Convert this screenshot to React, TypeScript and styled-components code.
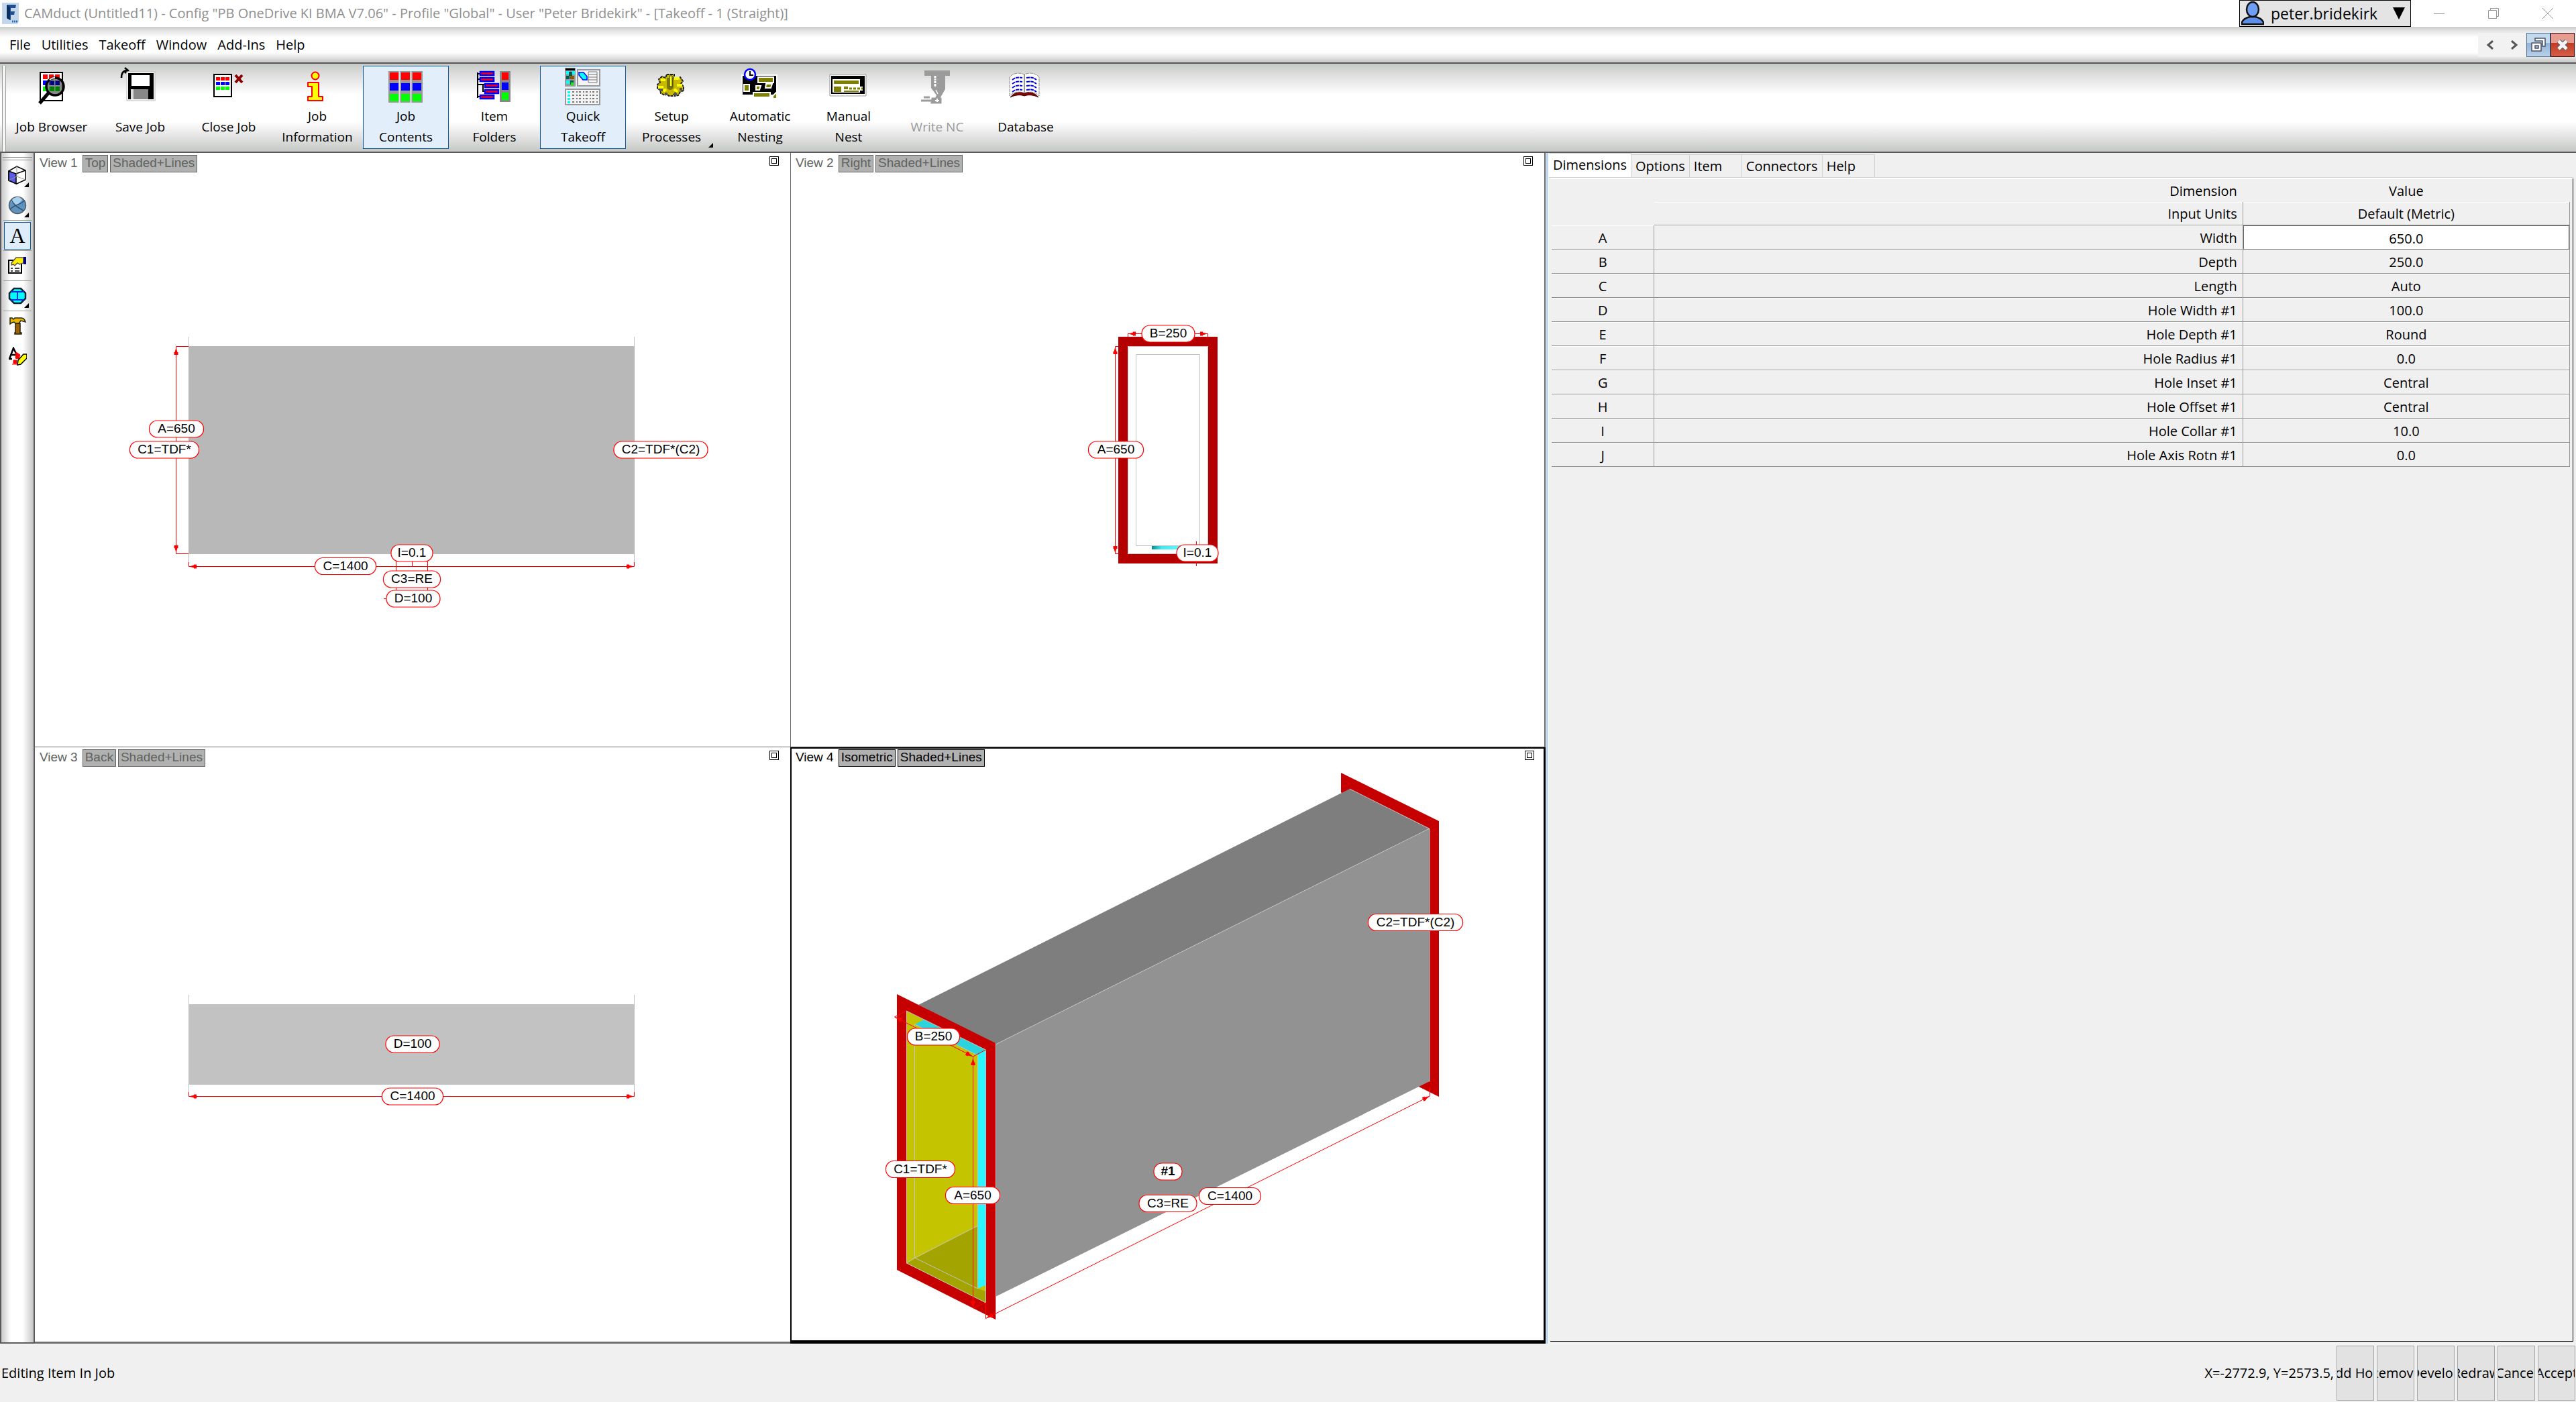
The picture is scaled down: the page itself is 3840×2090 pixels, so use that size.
import React from 'react';
import styled, { createGlobalStyle, css } from 'styled-components';

const ui = '"Open Sans", "Noto Sans", sans-serif';
const arial = '"Liberation Sans", Arial, sans-serif';

const GlobalStyle = createGlobalStyle`
  *, *::before, *::after { box-sizing: border-box; }
  body { margin: 0; background: #f0f0f0; color: #000; font: 20px/24px ${ui}; }
  button, input { font: inherit; color: inherit; }
`;

const Page = styled.div`
  display: flex;
  flex-direction: column;
  height: 100vh;
  min-height: 900px;
  overflow: hidden;
`;

/* ---------- title bar ---------- */

const TitleBar = styled.header`
  display: flex;
  align-items: center;
  height: 40px;
  padding-right: 2px;
  background: #fff;
  color: #8f8f8f;
`;

const AppTitle = styled.h1`
  flex: 1;
  margin: 0;
  padding-left: 6px;
  font-size: 20px;
  line-height: 24px;
  font-weight: 400;
  white-space: nowrap;
`;

const UserButton = styled.button`
  display: flex;
  align-items: center;
  width: 256px;
  height: 40px;
  margin-right: 1px;
  padding: 0 8px 0 2px;
  border: 1px solid #000;
  background: #e4e4e4;
  color: #000;
  font-size: 23px;
  span { flex: 1; text-align: left; padding-left: 10px; }
`;

const CaptionButton = styled.button`
  display: grid;
  place-items: center;
  width: 81px;
  height: 40px;
  padding: 0;
  border: 0;
  background: none;
`;

/* ---------- menu bar ---------- */

const MenuBar = styled.nav`
  display: flex;
  align-items: center;
  height: 55px;
  padding-left: 6px;
  border-bottom: 2px solid #5c585e;
  background: linear-gradient(#c9ccc9 0, #e6e6e6 7px, #fff 16px, #fff 38px, #e2e2e2 46px, #c4c8c4 53px);
`;

const MenuItem = styled.button`
  padding: 0 8px;
  border: 0;
  background: none;
`;

const ChildControls = styled.div`
  display: flex;
  align-items: center;
  margin-left: auto;
  padding-right: 2px;
  background: #f2f2f2;
`;

const ChildButton = styled.button<{ $width: number; $fill?: string; $edge?: string }>`
  display: grid;
  place-items: center;
  width: ${p => p.$width}px;
  height: 36px;
  padding: 0;
  border: ${p => (p.$edge ? `1px solid ${p.$edge}` : '0')};
  background: ${p => p.$fill ?? 'none'};
`;

/* ---------- tool bar ---------- */

const ToolBar = styled.div`
  display: flex;
  align-items: flex-start;
  gap: 4px;
  height: 133px;
  padding: 3px 0 0 3px;
  border-bottom: 2px solid #5c585e;
  background: linear-gradient(#c6cac6 0, #e2e2e2 20px, #fff 46px, #fff 86px, #e4e4e4 108px, #c4c8c4 131px);
`;

const Grip = styled.div`
  align-self: stretch;
  width: 6px;
  border-left: 1px solid #999;
  border-right: 1px solid #999;
  background: #f6f6f6;
`;

const ToolButton = styled.button<{ $active?: boolean }>`
  position: relative;
  display: flex;
  flex-direction: column;
  align-items: center;
  width: 128px;
  height: 124px;
  padding: 0;
  border: 1px solid ${p => (p.$active ? '#0c5ba0' : 'transparent')};
  background: ${p => (p.$active ? '#e2effb' : 'none')};
  font-size: 19px;
  line-height: 31px;
  &:disabled { color: #9a9a9a; }
`;

const ToolLabel = styled.span`
  display: grid;
  place-items: center;
  flex: 1;
  white-space: pre-line;
`;

const Corner = styled.i<{ $at: number }>`
  position: absolute;
  right: ${p => p.$at}px;
  bottom: ${p => p.$at}px;
  border-left: 7px solid transparent;
  border-bottom: 7px solid #000;
`;

/* ---------- work area ---------- */

const Work = styled.main`
  flex: 1;
  min-height: 0;
  display: grid;
  grid-template-columns: 52px minmax(0, 2252fr) 5px minmax(0, 1531fr);
`;

const SideBar = styled.div`
  display: flex;
  flex-direction: column;
  align-items: center;
  padding-top: 12px;
  border: solid #5c585e;
  border-width: 0 2px 2px;
  background: linear-gradient(90deg, #c8c8c8, #fff 14px, #fff 32px, #c6c6c6 48px);
`;

const SideGrip = styled.div`
  width: 44px;
  height: 5px;
  margin-top: -6px;
  border: solid #888;
  border-width: 1px 0;
`;

const SideSlot = styled.div<{ $rule?: boolean }>`
  display: grid;
  place-items: center;
  width: 42px;
  height: 45px;
  border-bottom: 1px solid ${p => (p.$rule ? '#98a098' : 'transparent')};
`;

const SideButton = styled.button<{ $active?: boolean }>`
  position: relative;
  display: grid;
  place-items: center;
  width: 40px;
  height: 41px;
  padding: 0;
  border: 1px solid ${p => (p.$active ? '#0c5ba0' : 'transparent')};
  background: ${p => (p.$active ? '#dfecf9' : 'none')};
  font-family: "Liberation Serif", "Times New Roman", serif;
  font-size: 32px;
`;

const Views = styled.section`
  display: grid;
  grid-template-columns: minmax(0, 1fr) minmax(0, 1fr);
  grid-template-rows: minmax(0, 886fr) minmax(0, 889fr);
  background: #fff;
`;

const ViewPane = styled.article<{ $active?: boolean; $col: number; $row: number }>`
  display: grid;
  grid-template: minmax(0, 1fr) / minmax(0, 1fr);
  min-height: 0;
  color: ${p => (p.$active ? '#000' : '#5e635e')};
  border: solid ${p => (p.$active ? '#000' : '#6c6c6c')};
  ${p =>
    p.$active
      ? css`border-width: 2px 3px 5px 2px;`
      : css`border-width: 0 ${p.$col === 2 ? 2 : 0}px ${p.$row === 2 ? 3 : 1}px ${p.$col === 2 ? 1 : 0}px;`}
`;

const ViewHead = styled.div<{ $active?: boolean }>`
  grid-area: 1 / 1;
  z-index: 1;
  display: flex;
  align-items: center;
  align-self: start;
  gap: 3px;
  padding: ${p => (p.$active ? '1px 14px 0 6px' : '3px 17px 0 7px')};
  font: 19px/22px ${arial};
`;

const ViewName = styled.h2`
  margin: 0;
  padding: 0 4px 2px 0;
  font: inherit;
`;

const ViewMode = styled.button`
  height: 26px;
  padding: 0 3px 2px;
  border: 1px solid currentColor;
  background: #b1b1b1;
`;

const MaxButton = styled.button`
  width: 14px;
  height: 14px;
  margin: 0 0 8px auto;
  padding: 0;
  border: 1px solid #000;
  box-shadow: inset 0 0 0 2px #fff, inset 0 0 0 3px #000;
  background: #fff;
`;

const Drawing = styled.svg`
  grid-area: 1 / 1;
  width: 100%;
  height: 100%;
  text { font-family: ${arial}; font-size: 19px; fill: #000; text-anchor: middle; }
`;

const Splitter = styled.div`
  border-left: 1px solid #eef;
  border-right: 1px solid #fff;
  background: #b9d5f0;
`;

/* ---------- properties ---------- */

const Properties = styled.aside`
  display: flex;
  flex-direction: column;
  min-width: 0;
  padding: 0 4px 3px 0;
`;

const TabList = styled.div`
  display: flex;
  align-items: flex-end;
  height: 37px;
  border-bottom: 1px solid #d0d6d0;
`;

const Tab = styled.button<{ $active?: boolean }>`
  min-width: 78px;
  height: ${p => (p.$active ? 37 : 35)}px;
  margin-bottom: -1px;
  padding: 0 6px ${p => (p.$active ? 2 : 0)}px;
  border: 1px solid #cdd3cd;
  border-left-width: 0;
  background: ${p => (p.$active ? '#fff' : '#f0f0f0')};
  text-align: left;
`;

const Sheet = styled.div`
  flex: 1;
  margin-left: 2px;
  padding: 0 4px 0 2px;
  border: solid;
  border-width: 2px 1px 1px 0;
  border-color: #fff #000 #000 #fff;
`;

const Table = styled.table`
  width: 100%;
  table-layout: fixed;
  border-collapse: separate;
  border-spacing: 0;
  th, td { height: 36px; padding: 2px 0 0; font-weight: 400; border-bottom: 1px solid #8b918b; box-shadow: inset 0 1px #fff; }
  tr > :nth-child(1) { text-align: center; border-right: 1px solid #999; }
  tr > :nth-child(2) { text-align: right; padding-right: 8px; border-right: 1px solid #999; }
  tr > :nth-child(3) { text-align: center; border-right: 1px solid #999; }
  thead th { height: 34px; box-shadow: none; border-color: transparent !important; }
  tbody tr:first-child > * { height: 35px; }
  tbody tr:first-child > :first-child { border-color: transparent; box-shadow: none; }
  tbody tr > td:has(input) { padding: 0; }
`;

const ValueInput = styled.input`
  display: block;
  width: 100%;
  height: 36px;
  margin-bottom: -1px;
  padding: 2px 0 0;
  border: 1px solid #666;
  background: #fff;
  text-align: center;
  outline: 0;
`;

/* ---------- status bar ---------- */

const StatusBar = styled.footer`
  display: flex;
  align-items: center;
  gap: 4px;
  height: 87px;
  padding: 0 1px 0 2px;
  border-top: 1px solid #fafafa;
`;

const Message = styled.p`
  flex: 1;
  margin: 0;
`;

const Action = styled.button`
  display: flex;
  justify-content: center;
  align-items: center;
  width: 56px;
  height: 82px;
  padding: 0;
  overflow: hidden;
  border: 1px solid #a6a6a6;
  background: #e2e2e2;
  white-space: nowrap;
`;

/* ---------- icons ---------- */

const R = '#f00';
const B = '#00f';
const G = '#0f0';

const MiniGrid = ({ x, y, w, h, px, py, colors = [R, B, G] }: { x: number; y: number; w: number; h: number; px: number; py: number; colors?: string[] }) => (
  <g>
    {colors.map((c, r) => [0, 1, 2].map(k => <rect key={`${r}${k}`} x={x + k * px} y={y + r * py} width={w} height={h} fill={c} />))}
  </g>
);

const toolIcons: Record<string, React.ReactNode> = {
  browser: (
    <>
      <rect x="15" y="9" width="33" height="42" fill="#fff" stroke="#000" strokeWidth="2" />
      <MiniGrid x={19} y={12} w={7} h={7} px={9} py={9} />
      <circle cx="37" cy="30" r="13" fill="#555" fillOpacity=".7" stroke="#000" strokeWidth="3.5" />
      <path d="M30 22h6v6h-6zM38 22h6v6h-6z" fill="#000080" />
      <path d="M30 30h6v7h-6zM38 30h6v7h-6z" fill="#008000" />
      <path d="M29 20a10 10 0 0 1 8-3" stroke="#ddd" strokeWidth="2" fill="none" />
      <path d="M27 40 14 55" stroke="#000" strokeWidth="5" />
    </>
  ),
  save: (
    <>
      <path d="M4 17c0-6 2-11 9-11M9 2l5 4-5 4" fill="none" stroke="#000" strokeWidth="2.5" />
      <rect x="12" y="8" width="42" height="43" fill="#fff" stroke="#bbb" />
      <path d="M14 10h38v39H14z" fill="#000" />
      <path d="M19 13h27v16H19z" fill="#fff" />
      <path d="M22 34h22v15H22z" fill="#888" />
      <path d="M18 34h4v15h-4z" fill="#ddd" />
    </>
  ),
  close: (
    <>
      <rect x="10" y="12" width="26" height="33" fill="#fff" stroke="#000" strokeWidth="2" />
      <MiniGrid x={13} y={16} w={6} h={5} px={7} py={7} />
      <path d="m42 13 10 11M52 13 42 24" stroke="#8b0000" strokeWidth="4" />
    </>
  ),
  info: (
    <>
      <ellipse cx="29" cy="14" rx="5.5" ry="5.5" fill="#ff0" stroke={R} strokeWidth="2" />
      <path d="M18 24h16v21h6v6H18v-6h6V30h-6z" fill="#ff0" stroke={R} strokeWidth="2" strokeLinejoin="round" />
    </>
  ),
  contents: (
    <>
      <path d="M6 7h51v47H6z" fill="#999" />
      <MiniGrid x={8} y={9} w={13} h={11} px={17} py={16} />
      <path d="M22.500 7v47M39.500 7v47" stroke="#e0e0e0" strokeWidth="2" />
    </>
  ),
  folders: (
    <>
      <path d="M7 9v38M7 11h4M7 19h4M7 27h10M7 45h5M15 27v10h4" stroke="#000" strokeWidth="2" fill="none" />
      {[[10, 7], [10, 16], [17, 25], [17, 34], [10, 42]].map(([x, y]) => (
        <rect key={y} x={x + 1} y={y + 1} width="20" height="5" fill={R} stroke={B} strokeWidth="2.500" />
      ))}
      <path d="M40 7h16v46H40z" fill="#888" />
      <path d="M43 9h10v11H43z" fill={R} />
      <path d="M43 24h10v11H43z" fill={B} />
      <path d="M43 39h10v11H43z" fill={G} />
    </>
  ),
  quick: (
    <>
      <path d="M5 2h16v28H5z" fill="#999" />
      <path d="M6 3h14v3H6z" fill="#000" />
      <path d="M7 7h5v5H7zM15 7h5v5h-5zM7 21h5v5H7z" fill="#0ff" />
      <path d="M11 8h5v6h-5zM7 14h5v5H7zM13 21h5v6h-5z" fill="#055" />
      <path d="M13 14h6v5h-6z" fill="#850" />
      <path d="M14 24h4v4h-4z" fill={G} />
      <path d="M24 5h33v24H24z" fill="#f4f4f4" stroke="#999" strokeWidth="2" />
      <path d="M26 9h7l5 6v5h-6l-6-7z" fill="#0ff" stroke={B} strokeWidth="1.500" />
      <path d="M40 8h13M40 12h13M40 16h13M40 20h13M40 24h13M40 8v16M53 8v16" stroke="#777" />
      <path d="M6 34h51v23H6z" fill="#f4f4f4" stroke="#999" strokeWidth="2" />
      <path d="M9 37h4v3H9zM9 42h4v3H9zM9 47h4v3H9zM9 52h4v3H9z" fill="#0ff" />
      <path d="M16 38h38M16 43h38M16 48h38M16 53h38" stroke="#777" strokeWidth="2" strokeDasharray="3 3 2 2" />
    </>
  ),
  setup: (
    <>
      <path
        d="M25 12h11v5l4 2 5-3 4 6-3 4 4 4v6l-5 2-3 5-5 1v-4l-3 4h-6l-3-3-3 2-6-3-1-5-4-2v-6l4-3-2-5 5-4 5 2z"
        fill="#c8b800"
        stroke="#222"
        strokeWidth="2"
        strokeDasharray="4 1"
      />
      <path d="M16 20h7M12 31h8M36 18h8M40 28h8M20 37l4-3M36 34l5 4" stroke="#ff0" strokeWidth="4" />
      <path d="M14 35h5M22 41h4M36 41h4M44 34h4" stroke="#555" strokeWidth="4" />
      <path d="M25 17h10v14a5 4 0 0 1-10 0z" fill="#7a7400" />
      <path d="M29 14h4v16h-4z" fill="#ff0" stroke="#333" />
    </>
  ),
  auto: (
    <>
      <path d="M5 13h52v30H5z" fill="#000" stroke="#fff" strokeWidth="2" />
      <path d="M29 16h23v8H29zM8 27h8v10H8zM22 39h25v7H22z" fill="#808000" stroke="#fff" strokeWidth="2" />
      <path d="M26 29h7l-2 6h-5zM41 26h9l-2 6h-8zM51 44l6-6v10h-6z" fill="#808000" stroke="#fff" strokeWidth="2" />
      <circle cx="17" cy="12" r="8" fill="#fff" stroke={B} strokeWidth="2.500" />
      <path d="M17 7v6h5" stroke="#000" strokeWidth="2" fill="none" />
    </>
  ),
  manual: (
    <>
      <path d="M4 12h54v32H4z" fill="#fff" stroke="#999" />
      <path d="M6 14h50v27H6z" fill="#000" />
      <path d="M8 19h41v20H8z" fill="#fff" />
      <path d="M10 21h37v5H10zM10 30h11v8H10zM25 30h6v4h-6zM25 36h22v2H25z" fill="#808000" />
      <path d="M33 33h20M33 29l4 3" stroke="#fff" strokeWidth="6" />
      <path d="M33 33h20" stroke="#808000" strokeWidth="3" strokeDasharray="4 2" />
    </>
  ),
  write: (
    <>
      <path d="M13 6h38v8h-7v20l-7 12-1 3H28l3-6-8-11V14H13z" fill="#9b9b9b" />
      <path d="M29 14v17" stroke="#fff" strokeWidth="3" strokeDasharray="3 1" />
      <path d="M30 35l3 6" stroke="#fff" strokeWidth="1.500" />
      <path d="M8 51h28M12 46h9M25 48h12v6H24z" stroke="#9b9b9b" strokeWidth="3" fill="#9b9b9b" />
      <path d="M32 48v5M29 51h6" stroke="#fff" strokeWidth="2" />
    </>
  ),
  database: (
    <>
      <path d="M8 44V16c6-7 16-7 22-4 6-3 16-3 22 4v28c-6-7-16-7-22-4-6-3-16-3-22 4z" fill="#fff" stroke="#888" strokeDasharray="5 1" />
      <path d="M9 46c6-8 15-8 21-6 6-2 15-2 21 6-8-4-16-4-21-2-5-2-13-2-21 2z" fill="#8b0000" stroke="#400" />
      <path d="M30 12v28" stroke="#999" strokeWidth="2" />
      <path d="M12 20c5-4 9-4 15-3M12 26c5-4 9-4 15-3M12 32c5-4 9-4 15-3M12 38c5-4 9-4 15-3M33 17c6-1 10-1 15 3M33 23c6-1 10-1 15 3M33 29c6-1 10-1 15 3M33 35c6-1 10-1 15 3" fill="none" stroke={B} strokeWidth="2" strokeDasharray="5 1" />
    </>
  ),
};

type Tool = { label: string; icon: string; active?: boolean; disabled?: boolean; menu?: boolean };
const tools: Tool[] = [
  { label: 'Job Browser', icon: 'browser' },
  { label: 'Save Job', icon: 'save' },
  { label: 'Close Job', icon: 'close' },
  { label: 'Job\nInformation', icon: 'info' },
  { label: 'Job\nContents', icon: 'contents', active: true },
  { label: 'Item\nFolders', icon: 'folders' },
  { label: 'Quick\nTakeoff', icon: 'quick', active: true },
  { label: 'Setup\nProcesses', icon: 'setup', menu: true },
  { label: 'Automatic\nNesting', icon: 'auto' },
  { label: 'Manual\nNest', icon: 'manual' },
  { label: 'Write NC', icon: 'write', disabled: true },
  { label: 'Database', icon: 'database' },
];

const SideIcon = ({ children }: { children: React.ReactNode }) => (
  <svg width="28" height="28" viewBox="0 0 28 28" aria-hidden="true">{children}</svg>
);

const sideTools: { name: string; icon: React.ReactNode; active?: boolean; menu?: boolean; rule?: boolean }[] = [
  {
    name: 'View cube',
    menu: true,
    icon: (
      <SideIcon>
        <path d="M1 8 13 1l13 6v14l-13 6-12-5z" fill="#fff" stroke="#000" strokeWidth="1.500" />
        <path d="M1 8l11 4v15L1 22z" fill="#5a5ae4" stroke="#000" strokeWidth="1.500" />
        <path d="M12 12l14-5" stroke="#000" strokeWidth="1.500" />
        <path d="M13 1v15l13 5M13 16l-12 6" stroke="#999" fill="none" />
      </SideIcon>
    ),
  },
  {
    name: 'Shading',
    menu: true,
    rule: true,
    icon: (
      <SideIcon>
        <circle cx="14" cy="14" r="12.500" fill="#5f93bd" stroke="#4c5a66" strokeWidth="1.500" />
        <path d="M4 8c6-8 14-8 17-2L13 15z" fill="#a9d0ee" />
        <path d="M3 20c8-8 14-6 22-13M5 6c5 10 12 12 18 16" fill="none" stroke="#2c5274" strokeWidth="1.500" />
      </SideIcon>
    ),
  },
  { name: 'Annotations', active: true, rule: true, icon: 'A' },
  {
    name: 'Properties',
    rule: true,
    icon: (
      <SideIcon>
        <path d="M1 6h19v19H1z" fill="#fff" stroke="#000" strokeWidth="2" />
        <path d="M4 18h3M4 22h3M10 18h7M10 22h7" stroke="#000" strokeWidth="1.500" />
        <path d="m5 10 7-8h11v8l-6 2-3-2-4 4-2-2-3 1z" fill="#fe0" stroke="#554" strokeWidth="1.500" />
        <path d="M23 1h4v11h-4z" fill="#00007a" />
      </SideIcon>
    ),
  },
  {
    name: 'Insulation',
    menu: true,
    rule: true,
    icon: (
      <SideIcon>
        <path d="M9 3h10l7 7v8l-7 7H9l-7-7v-8z" fill="#0ff" stroke="#123" strokeWidth="2.500" />
        <path d="M4 8h20M4 20h20M14 8v12" stroke="#0030e0" strokeWidth="2" />
      </SideIcon>
    ),
  },
  {
    name: 'Build',
    icon: (
      <SideIcon>
        <path d="M11 10h7v14h2v2h-10v-2h1z" fill="#a06000" stroke="#221" strokeWidth="1.500" />
        <path d="M3 2h3l2 2 2-2h10c4 0 5 3 6 6l-7-2-3 4h-5l-2-2-3 1-3 2z" fill="#e8b800" stroke="#221" strokeWidth="1.500" />
      </SideIcon>
    ),
  },
  {
    name: 'Edit text',
    icon: (
      <SideIcon>
        <path d="M2 18 8 2l7 14M4 12h8M1 18h5" stroke="#000" strokeWidth="2.500" fill="none" />
        <path d="M6 26h8M8 20h5v5H8zM12 8l6 4-2 6-5-1z" fill={R} stroke={R} />
        <path d="m15 20 8-9h5v6l-9 9-5 1z" fill="#ff0" stroke="#000" strokeWidth="1.500" />
      </SideIcon>
    ),
  },
];

/* ---------- model drawings ---------- */

/* x, y: centre of the tag; w: its width */
const Tag = ({ x, y, w, bold, children }: { x: number; y: number; w: number; bold?: boolean; children: string }) => (
  <g>
    <rect x={x - w / 2} y={y - 12.5} width={w} height="25" rx="12" fill="#fff" stroke={R} strokeWidth="1.200" />
    <text x={x} y={y + 5.5} fontWeight={bold ? 700 : 400}>{children}</text>
  </g>
);

const Arrow = ({ x, y, a }: { x: number; y: number; a: number }) => (
  <path d="M0 0 7-2V-3h4V3H7V2z" fill={R} transform={`translate(${x} ${y}) rotate(${a})`} />
);

const redLine = { stroke: R, strokeWidth: 1, fill: 'none' };
const greyLine = { stroke: '#c2c2c8', strokeWidth: 1, fill: 'none' };

const TopView = () => (
  <Drawing viewBox="52 228 1126 885" role="img" aria-label="Top view">
    <path d="M281.5 502v342M945.5 502v342" {...greyLine} />
    <rect x="281" y="516" width="665" height="310" fill="#b8b8b8" />
    <path d="M281 516.5h-18.500v309H281M281.500 838v6.500h664V838" {...redLine} />
    <path d="M590.500 837v43M637.500 837v43M614.500 837v8M572 892.500h5" {...redLine} />
    <Arrow x={262.5} y={518} a={90} />
    <Arrow x={262.5} y={824} a={-90} />
    <Arrow x={282} y={844.5} a={0} />
    <Arrow x={945} y={844.5} a={180} />
    <Tag x={263} y={639.5} w={81}>A=650</Tag>
    <Tag x={245} y={670.5} w={103}>C1=TDF*</Tag>
    <Tag x={985} y={670.5} w={140}>C2=TDF*(C2)</Tag>
    <Tag x={614} y={824.5} w={62}>I=0.1</Tag>
    <Tag x={515} y={844} w={91}>C=1400</Tag>
    <Tag x={614} y={863.5} w={85}>C3=RE</Tag>
    <Tag x={616} y={892.5} w={80}>D=100</Tag>
  </Drawing>
);

const RightView = () => (
  <Drawing viewBox="1179 228 1123 885" role="img" aria-label="Right view">
    <defs>
      <linearGradient id="collar">
        <stop offset="0" stopColor="#008c90" />
        <stop offset=".3" stopColor="#40e8f0" />
        <stop offset="1" stopColor="#60ffff" />
      </linearGradient>
    </defs>
    <path d="M1667 502h148v338h-148zM1681 516v310h120V516z" fill="#b40000" fillRule="evenodd" />
    <path d="M1681.500 516.500h119v309h-119zM1693.500 528.500h95v285h-95z" {...greyLine} />
    <rect x="1717" y="814" width="48" height="5" fill="url(#collar)" />
    <path d="M1667 516.500h-4.500v309h4.500M1681.500 502v-4.500h119v4.500M1783.500 807v37" {...redLine} />
    <Arrow x={1662.5} y={517} a={90} />
    <Arrow x={1662.5} y={825} a={-90} />
    <Arrow x={1682} y={497.5} a={0} />
    <Arrow x={1800} y={497.5} a={180} />
    <Tag x={1741.5} y={497.5} w={79}>B=250</Tag>
    <Tag x={1663.5} y={670.5} w={82}>A=650</Tag>
    <Tag x={1785} y={824.5} w={62}>I=0.1</Tag>
  </Drawing>
);

const BackView = () => (
  <Drawing viewBox="52 1114 1126 886" role="img" aria-label="Back view">
    <path d="M281.500 1483v150M945.500 1483v150" {...greyLine} />
    <rect x="281" y="1497" width="665" height="120" fill="#c2c2c2" />
    <path d="M281.500 1628v6.500h664v-6.500" {...redLine} />
    <Arrow x={282} y={1634.5} a={0} />
    <Arrow x={945} y={1634.5} a={180} />
    <Tag x={615} y={1556.5} w={80}>D=100</Tag>
    <Tag x={615} y={1634.5} w={91}>C=1400</Tag>
  </Drawing>
);

const IsoView = () => (
  <Drawing viewBox="1180 1116 1121 882" role="img" aria-label="Isometric view">
    <path d="M1999 1152l146 72v411l-30-15V1300l-116-119z" fill="#c60000" />
    <path d="M1369 1498l643-322 119 59-647 322z" fill="#7e7e7e" />
    <path d="M1484 1557l647-322v377l-647 321z" fill="#929292" />
    <path d="M1484 1557l647-322M2012 1176l119 59.500v377" {...greyLine} />
    <path d="M1337 1482l147 73v412l-147-74z" fill="#c60000" />
    <path d="M1351 1507l118 58v377l-118-59z" fill="#c4c400" />
    <path d="M1351 1883l106.500-55.500v93.500l12 4v17z" fill="#a4a400" />
    <path d="M1364 1527l13-7 92 45-12 8z" fill="#2cd4de" />
    <path d="M1457 1573l12-8v351l-12 5z" fill="#2cf6ff" />
    <path d="M1351.500 1507l118 58v377l-118-59zM1363.500 1527v348l94 46v-348zM1363.500 1875l94-47.500M1351.500 1883l12-8M1484.500 1555v412" {...greyLine} />
    <path d="M1351 1507l-17.500 9 117 59v375l19-8M1450.500 1575l19-10M1469.500 1942v23.500L2131.500 1634v-14" {...redLine} />
    <Arrow x={1334} y={1516} a={27} />
    <Arrow x={1450} y={1575} a={207} />
    <Arrow x={1450.5} y={1577} a={90} />
    <Arrow x={1450.5} y={1950} a={-90} />
    <Arrow x={1470} y={1965} a={-27} />
    <Arrow x={2131} y={1634} a={153} />
    <Tag x={2110} y={1375} w={141}>C2=TDF*(C2)</Tag>
    <Tag x={1391.5} y={1545.5} w={78}>B=250</Tag>
    <Tag x={1372} y={1743} w={103}>C1=TDF*</Tag>
    <Tag x={1450} y={1782} w={81}>A=650</Tag>
    <Tag x={1741} y={1746.5} w={42} bold>#1</Tag>
    <Tag x={1741} y={1794} w={86}>C3=RE</Tag>
    <Tag x={1833.5} y={1783} w={92}>C=1400</Tag>
  </Drawing>
);

const views = [
  { name: 'View 1', mode: 'Top', Model: TopView, col: 1, row: 1 },
  { name: 'View 2', mode: 'Right', Model: RightView, col: 2, row: 1 },
  { name: 'View 3', mode: 'Back', Model: BackView, col: 1, row: 2 },
  { name: 'View 4', mode: 'Isometric', Model: IsoView, col: 2, row: 2, active: true },
];

const dimensions = [
  ['A', 'Width', '650.0'],
  ['B', 'Depth', '250.0'],
  ['C', 'Length', 'Auto'],
  ['D', 'Hole Width #1', '100.0'],
  ['E', 'Hole Depth #1', 'Round'],
  ['F', 'Hole Radius #1', '0.0'],
  ['G', 'Hole Inset #1', 'Central'],
  ['H', 'Hole Offset #1', 'Central'],
  ['I', 'Hole Collar #1', '10.0'],
  ['J', 'Hole Axis Rotn #1', '0.0'],
];

export default function App() {
  return (
    <Page>
      <GlobalStyle />
      <TitleBar>
        <svg width="30" height="32" viewBox="0 0 30 32" aria-hidden="true">
          <path d="M3 0h25v28l-2 4H3z" fill="#c4d6ea" />
          <path d="M10 3h14l-1 5h-7v5h6l-1 5h-5v8l-6-3z" fill="#1b4f91" />
          <path d="M10 3l5 4v19l-5-3z" fill="#0d2f5e" />
          <path d="M18 28h8" stroke="#2a6ab8" strokeWidth="3" strokeDasharray="2 1" />
        </svg>
        <AppTitle>CAMduct (Untitled11) - Config "PB OneDrive KI BMA V7.06" - Profile "Global" - User "Peter Bridekirk" - [Takeoff - 1 (Straight)]</AppTitle>
        <UserButton>
          <svg width="34" height="36" viewBox="0 0 34 36" aria-hidden="true">
            <path d="M1 34v-3c2-5 8-7 12-8h8c4 1 10 3 12 8v3z" fill="#5c8de8" stroke="#111" strokeWidth="2.500" />
            <ellipse cx="17" cy="12" rx="9" ry="11" fill="#6f9ff4" stroke="#111" strokeWidth="2.500" />
          </svg>
          <span>peter.bridekirk</span>
          <svg width="18" height="18" viewBox="0 0 18 18" aria-hidden="true"><path d="M0 0h18L9 18z" /></svg>
        </UserButton>
        <CaptionButton aria-label="Minimize">
          <svg width="16" height="16" viewBox="0 0 16 16"><path d="M0 8.500h16" stroke="#999" /></svg>
        </CaptionButton>
        <CaptionButton aria-label="Restore">
          <svg width="16" height="16" viewBox="0 0 16 16"><path d="M.5 3.500h12v12H.5zM3.500 3.500v-3h12v12h-3" fill="none" stroke="#999" /></svg>
        </CaptionButton>
        <CaptionButton aria-label="Close">
          <svg width="16" height="16" viewBox="0 0 16 16"><path d="m0 0 16 16M16 0 0 16" stroke="#999" /></svg>
        </CaptionButton>
      </TitleBar>

      <MenuBar>
        {['File', 'Utilities', 'Takeoff', 'Window', 'Add-Ins', 'Help'].map(m => <MenuItem key={m}>{m}</MenuItem>)}
        <ChildControls>
          <ChildButton $width={36} aria-label="Previous">
            <svg width="12" height="14" viewBox="0 0 12 14"><path d="M10 1 3 7l7 6" fill="none" stroke="#555" strokeWidth="3" /></svg>
          </ChildButton>
          <ChildButton $width={36} aria-label="Next">
            <svg width="12" height="14" viewBox="0 0 12 14"><path d="m2 1 7 6-7 6" fill="none" stroke="#555" strokeWidth="3" /></svg>
          </ChildButton>
          <ChildButton $width={36} $edge="#4f6f94" $fill="linear-gradient(#c3d9ee 40%, #93b2d6 41%, #b9d0e8)" aria-label="Restore child window">
            <svg width="24" height="24" viewBox="0 0 24 24" fill="#fff" stroke="#49536a" strokeWidth="1.500">
              <path d="M7 2h15v12h-4v-8H7z" /><path d="M2 9h14v12H2zM7 13h5v4H7z" fillRule="evenodd" />
            </svg>
          </ChildButton>
          <ChildButton $width={36} $edge="#3d0c12" $fill="linear-gradient(#e79c90 40%, #c23a20 41%, #d4604a)" aria-label="Close child window">
            <svg width="24" height="24" viewBox="0 0 24 24"><path d="m6 6 12 12M18 6 6 18" stroke="#555a66" strokeWidth="7" /><path d="m6 6 12 12M18 6 6 18" stroke="#f4f4f4" strokeWidth="5" /></svg>
          </ChildButton>
        </ChildControls>
      </MenuBar>

      <ToolBar>
        <Grip />
        {tools.map(t => (
          <ToolButton key={t.label} $active={t.active} disabled={t.disabled}>
            <svg width="64" height="58" viewBox="0 0 64 58" aria-hidden="true">{toolIcons[t.icon]}</svg>
            <ToolLabel>{t.label}</ToolLabel>
            {t.menu && <Corner $at={1} />}
          </ToolButton>
        ))}
      </ToolBar>

      <Work>
        <SideBar>
          <SideGrip />
          {sideTools.map(t => (
            <SideSlot key={t.name} $rule={t.rule}>
              <SideButton $active={t.active} aria-label={t.name}>
                {t.icon}
                {t.menu && <Corner $at={2} />}
              </SideButton>
            </SideSlot>
          ))}
        </SideBar>

        <Views>
          {views.map(({ name, mode, Model, col, row, active }) => (
            <ViewPane key={name} $active={active} $col={col} $row={row}>
              <ViewHead $active={active}>
                <ViewName>{name}</ViewName>
                <ViewMode>{mode}</ViewMode>
                <ViewMode>Shaded+Lines</ViewMode>
                <MaxButton aria-label={`Maximize ${name}`} />
              </ViewHead>
              <Model />
            </ViewPane>
          ))}
        </Views>

        <Splitter />

        <Properties>
          <TabList role="tablist">
            {['Dimensions', 'Options', 'Item', 'Connectors', 'Help'].map((t, i) => (
              <Tab key={t} role="tab" aria-selected={i === 0} $active={i === 0}>{t}</Tab>
            ))}
          </TabList>
          <Sheet>
            <Table>
              <colgroup>
                <col style={{ width: '10.1%' }} />
                <col />
                <col style={{ width: '32.1%' }} />
              </colgroup>
              <thead>
                <tr><th /><th>Dimension</th><th>Value</th></tr>
              </thead>
              <tbody>
                <tr><td /><td>Input Units</td><td>Default (Metric)</td></tr>
                {dimensions.map(([key, label, value], i) => (
                  <tr key={key}>
                    <td>{key}</td>
                    <td>{i === 0 ? <label htmlFor="dim-width">{label}</label> : label}</td>
                    <td>{i === 0 ? <ValueInput id="dim-width" defaultValue={value} /> : value}</td>
                  </tr>
                ))}
              </tbody>
            </Table>
          </Sheet>
        </Properties>
      </Work>

      <StatusBar>
        <Message>Editing Item In Job</Message>
        <span>X=-2772.9, Y=2573.5,</span>
        {['Add Hole', 'Remove', 'Develop', 'Redraw', 'Cancel', 'Accept'].map(a => <Action key={a}>{a}</Action>)}
      </StatusBar>
    </Page>
  );
}
